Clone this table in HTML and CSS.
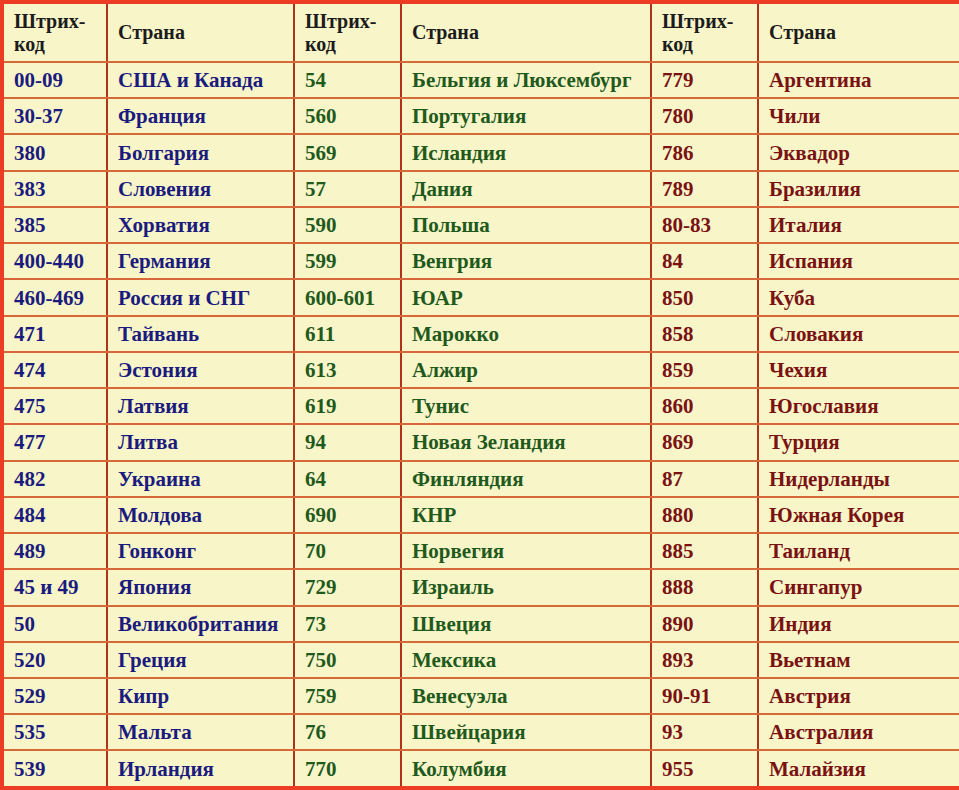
FILE: index.html
```html
<!DOCTYPE html>
<html lang="ru">
<head>
<meta charset="utf-8">
<title>Штрих-коды стран</title>
<link rel="stylesheet" href="styles.css">
</head>
<body>
<table class="codes">
<colgroup>
<col class="c1"><col class="c2"><col class="c3"><col class="c4"><col class="c5"><col class="c6">
</colgroup>
<thead>
<tr><th>Штрих-<br>код</th><th>Страна</th><th>Штрих-<br>код</th><th>Страна</th><th>Штрих-<br>код</th><th>Страна</th></tr>
</thead>
<tbody>
<tr><td class="b">00-09</td><td class="b">США и Канада</td><td class="g">54</td><td class="g">Бельгия и Люксембург</td><td class="r">779</td><td class="r">Аргентина</td></tr>
<tr><td class="b">30-37</td><td class="b">Франция</td><td class="g">560</td><td class="g">Португалия</td><td class="r">780</td><td class="r">Чили</td></tr>
<tr><td class="b">380</td><td class="b">Болгария</td><td class="g">569</td><td class="g">Исландия</td><td class="r">786</td><td class="r">Эквадор</td></tr>
<tr><td class="b">383</td><td class="b">Словения</td><td class="g">57</td><td class="g">Дания</td><td class="r">789</td><td class="r">Бразилия</td></tr>
<tr><td class="b">385</td><td class="b">Хорватия</td><td class="g">590</td><td class="g">Польша</td><td class="r">80-83</td><td class="r">Италия</td></tr>
<tr><td class="b">400-440</td><td class="b">Германия</td><td class="g">599</td><td class="g">Венгрия</td><td class="r">84</td><td class="r">Испания</td></tr>
<tr><td class="b">460-469</td><td class="b">Россия и СНГ</td><td class="g">600-601</td><td class="g">ЮАР</td><td class="r">850</td><td class="r">Куба</td></tr>
<tr><td class="b">471</td><td class="b">Тайвань</td><td class="g">611</td><td class="g">Марокко</td><td class="r">858</td><td class="r">Словакия</td></tr>
<tr><td class="b">474</td><td class="b">Эстония</td><td class="g">613</td><td class="g">Алжир</td><td class="r">859</td><td class="r">Чехия</td></tr>
<tr><td class="b">475</td><td class="b">Латвия</td><td class="g">619</td><td class="g">Тунис</td><td class="r">860</td><td class="r">Югославия</td></tr>
<tr><td class="b">477</td><td class="b">Литва</td><td class="g">94</td><td class="g">Новая Зеландия</td><td class="r">869</td><td class="r">Турция</td></tr>
<tr><td class="b">482</td><td class="b">Украина</td><td class="g">64</td><td class="g">Финляндия</td><td class="r">87</td><td class="r">Нидерланды</td></tr>
<tr><td class="b">484</td><td class="b">Молдова</td><td class="g">690</td><td class="g">КНР</td><td class="r">880</td><td class="r">Южная Корея</td></tr>
<tr><td class="b">489</td><td class="b">Гонконг</td><td class="g">70</td><td class="g">Норвегия</td><td class="r">885</td><td class="r">Таиланд</td></tr>
<tr><td class="b">45 и 49</td><td class="b">Япония</td><td class="g">729</td><td class="g">Израиль</td><td class="r">888</td><td class="r">Сингапур</td></tr>
<tr><td class="b">50</td><td class="b">Великобритания</td><td class="g">73</td><td class="g">Швеция</td><td class="r">890</td><td class="r">Индия</td></tr>
<tr><td class="b">520</td><td class="b">Греция</td><td class="g">750</td><td class="g">Мексика</td><td class="r">893</td><td class="r">Вьетнам</td></tr>
<tr><td class="b">529</td><td class="b">Кипр</td><td class="g">759</td><td class="g">Венесуэла</td><td class="r">90-91</td><td class="r">Австрия</td></tr>
<tr><td class="b">535</td><td class="b">Мальта</td><td class="g">76</td><td class="g">Швейцария</td><td class="r">93</td><td class="r">Австралия</td></tr>
<tr><td class="b">539</td><td class="b">Ирландия</td><td class="g">770</td><td class="g">Колумбия</td><td class="r">955</td><td class="r">Малайзия</td></tr>
</tbody>
</table>
</body>
</html>
```
FILE: styles.css
```css
html, body {
  margin: 0;
  padding: 0;
  background: #f8f5c9;
}
.codes {
  width: 959px;
  height: 790px;
  border-collapse: collapse;
  table-layout: fixed;
  background: #f8f5c9;
  border: 4px solid #ec3d24;
  font-family: "Liberation Serif", "Times New Roman", serif;
  font-weight: bold;
  font-size: 21px;
}
.c1 { width: 105px; }
.c2 { width: 187px; }
.c3 { width: 107px; }
.c4 { width: 250px; }
.c5 { width: 107px; }
.c6 { width: 203px; }
.codes th, .codes td {
  border-left: 2px solid #b0321c;
  border-right: 2px solid #b0321c;
  border-top: 2px solid #d8673a;
  border-bottom: 2px solid #d8673a;
  text-align: left;
  padding: 0 0 0 10px;
  white-space: nowrap;
  overflow: hidden;
}
.codes th {
  height: 57px;
  color: #1c1c1c;
  font-size: 20px;
  font-weight: bold;
  line-height: 23px;
  padding-top: 0;
}
.codes td {
  height: 33px;
  line-height: 22px;
}
.b { color: #1b1b7e; }
.g { color: #1f5a1c; }
.r { color: #7a1212; }
```
